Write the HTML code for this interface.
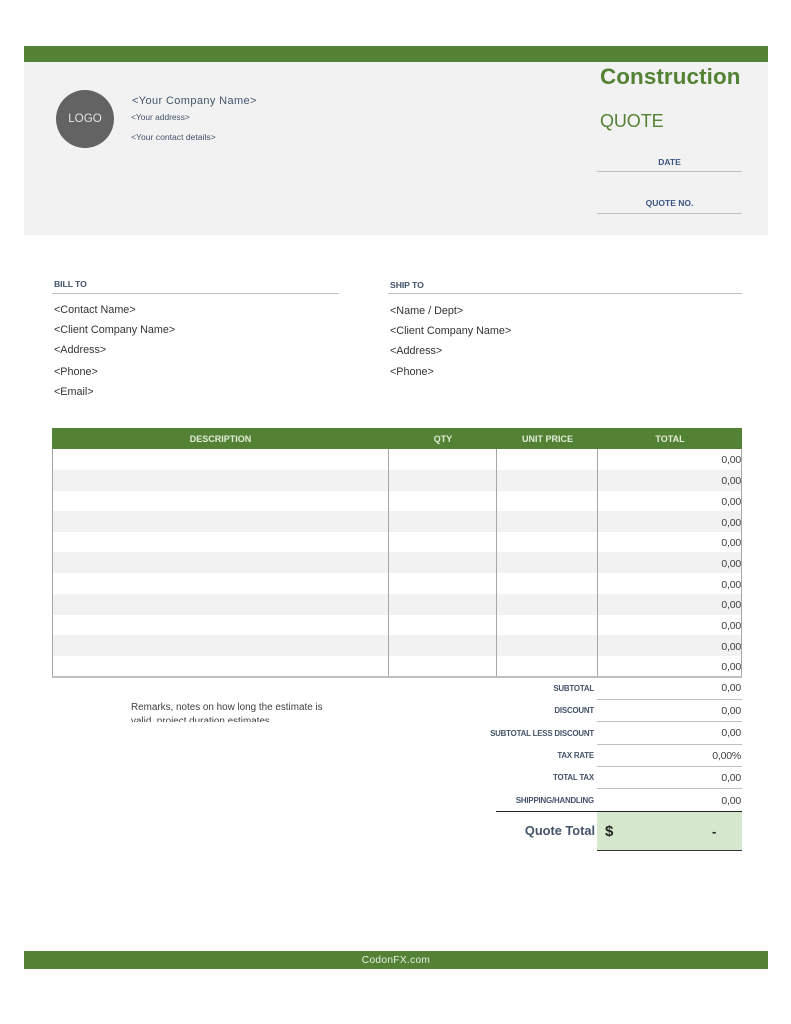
<!DOCTYPE html>
<html><head><meta charset="utf-8">
<style>
html,body{margin:0;padding:0;background:#fff}
#p{position:relative;width:791px;height:1024px;overflow:hidden;background:#fff;font-family:"Liberation Sans",sans-serif}
#p div{position:absolute}
.t{white-space:nowrap;line-height:14px;height:14px}
.g{background:#548235}
.l{background:#bfbfbf;height:1px}
.v{background:#a6a6a6;width:1px;top:449px;height:228px}
.r{background:#f2f2f2;left:53px;width:688px;height:21px}
.lab{font-weight:bold;font-size:8.7px;color:#44546a;letter-spacing:-.1px}
.nav{font-weight:bold;font-size:8.5px;color:#3b5484}
.b{font-size:10.8px;color:#333;left:54px}
.s{font-size:10.8px;color:#333;left:390px}
.n{font-size:10.5px;color:#404040;right:50px;letter-spacing:-.2px}
.sl{font-weight:bold;font-size:7.9px;color:#44546a;right:197px;letter-spacing:-.2px}
.h{font-weight:bold;font-size:9px;color:#e2ecd9;text-align:center}
</style></head><body><div id="p">
<div class="g" style="left:24px;top:46px;width:744px;height:16px"></div>
<div style="left:24px;top:62px;width:744px;height:173px;background:#f2f2f2"></div>
<div style="left:56px;top:90px;width:58px;height:58px;border-radius:50%;background:#636363"></div>
<div class="t" style="left:56px;top:112px;width:58px;text-align:center;font-size:11.6px;color:#e4e4e4">LOGO</div>
<div class="t" style="left:132px;top:94px;font-size:11px;color:#44546a;letter-spacing:.38px">&lt;Your Company Name&gt;</div>
<div class="t" style="left:131px;top:110px;font-size:8.4px;color:#44546a">&lt;Your address&gt;</div>
<div class="t" style="left:131px;top:130px;font-size:8.6px;color:#44546a">&lt;Your contact details&gt;</div>
<div class="t" style="left:600px;top:70px;font-size:22.4px;font-weight:bold;color:#548235;letter-spacing:.1px">Construction</div>
<div class="t" style="left:600px;top:114px;font-size:18px;color:#548235;letter-spacing:-.1px">QUOTE</div>
<div class="t nav" style="left:597px;width:145px;top:155px;text-align:center">DATE</div>
<div class="l" style="left:597px;top:171px;width:145px"></div>
<div class="t nav" style="left:597px;width:145px;top:196px;text-align:center">QUOTE NO.</div>
<div class="l" style="left:597px;top:213px;width:145px"></div>

<div class="t lab" style="left:54px;top:277px">BILL TO</div>
<div class="l" style="left:52px;top:293px;width:287px"></div>
<div class="t lab" style="left:390px;top:278px">SHIP TO</div>
<div class="l" style="left:388px;top:293px;width:354px"></div>
<div class="t b" style="top:303px">&lt;Contact Name&gt;</div>
<div class="t b" style="top:323px">&lt;Client Company Name&gt;</div>
<div class="t b" style="top:343px">&lt;Address&gt;</div>
<div class="t b" style="top:365px">&lt;Phone&gt;</div>
<div class="t b" style="top:385px">&lt;Email&gt;</div>
<div class="t s" style="top:304px">&lt;Name / Dept&gt;</div>
<div class="t s" style="top:324px">&lt;Client Company Name&gt;</div>
<div class="t s" style="top:344px">&lt;Address&gt;</div>
<div class="t s" style="top:365px">&lt;Phone&gt;</div>

<div class="g" style="left:52px;top:428px;width:690px;height:21px"></div>
<div class="t h" style="left:52px;width:337px;top:432px">DESCRIPTION</div>
<div class="t h" style="left:389px;width:108px;top:432px">QTY</div>
<div class="t h" style="left:497px;width:101px;top:432px">UNIT PRICE</div>
<div class="t h" style="left:598px;width:144px;top:432px">TOTAL</div>

<div class="r" style="top:470px"></div>
<div class="r" style="top:511px"></div>
<div class="r" style="top:552px"></div>
<div class="r" style="top:594px"></div>
<div class="r" style="top:635px"></div>
<div class="v" style="left:52px"></div>
<div class="v" style="left:388px"></div>
<div class="v" style="left:496px"></div>
<div class="v" style="left:597px"></div>
<div class="v" style="left:741px"></div>
<div class="l" style="left:52px;top:676px;width:690px;height:2px"></div>

<div class="t n" style="top:453px">0,00</div>
<div class="t n" style="top:474px">0,00</div>
<div class="t n" style="top:495px">0,00</div>
<div class="t n" style="top:516px">0,00</div>
<div class="t n" style="top:536px">0,00</div>
<div class="t n" style="top:557px">0,00</div>
<div class="t n" style="top:578px">0,00</div>
<div class="t n" style="top:598px">0,00</div>
<div class="t n" style="top:619px">0,00</div>
<div class="t n" style="top:640px">0,00</div>
<div class="t n" style="top:660px">0,00</div>

<div style="left:131px;top:701px;width:200px;height:21px;overflow:hidden;font-size:9.9px;line-height:14px;color:#404040;white-space:nowrap">Remarks, notes on how long the estimate is<br>valid, project duration estimates</div>

<div class="t sl" style="top:682px">SUBTOTAL</div>
<div class="t n" style="top:681px">0,00</div>
<div class="l" style="left:597px;top:699px;width:145px"></div>
<div class="t sl" style="top:704px">DISCOUNT</div>
<div class="t n" style="top:704px">0,00</div>
<div class="l" style="left:597px;top:721px;width:145px"></div>
<div class="t sl" style="top:727px">SUBTOTAL LESS DISCOUNT</div>
<div class="t n" style="top:726px">0,00</div>
<div class="l" style="left:597px;top:744px;width:145px"></div>
<div class="t sl" style="top:749px">TAX RATE</div>
<div class="t n" style="top:749px">0,00%</div>
<div class="l" style="left:597px;top:766px;width:145px"></div>
<div class="t sl" style="top:771px">TOTAL TAX</div>
<div class="t n" style="top:771px">0,00</div>
<div class="l" style="left:597px;top:788px;width:145px"></div>
<div class="t sl" style="top:794px">SHIPPING/HANDLING</div>
<div class="t n" style="top:794px">0,00</div>
<div style="left:496px;top:811px;width:246px;height:1px;background:#222"></div>
<div style="left:597px;top:812px;width:145px;height:38px;background:#d5e7cd"></div>
<div style="left:597px;top:850px;width:145px;height:1px;background:#333"></div>
<div class="t" style="right:196px;top:824px;font-size:12.8px;font-weight:bold;color:#44546a">Quote Total</div>
<div class="t" style="left:605px;top:825px;font-size:15px;font-weight:bold;color:#222">$</div>
<div class="t" style="left:712px;top:825px;font-size:13px;font-weight:bold;color:#222">-</div>

<div class="g" style="left:24px;top:951px;width:744px;height:18px"></div>
<div class="t" style="left:24px;width:744px;top:954px;text-align:center;font-size:10.2px;color:#e8efe2;letter-spacing:.3px">CodonFX.com</div>
</div></body></html>
